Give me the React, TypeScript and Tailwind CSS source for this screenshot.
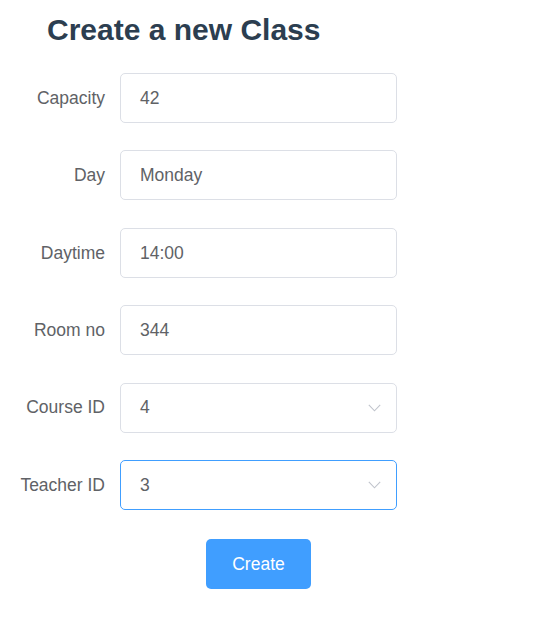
import React from "react";

const font = { fontFamily: '"Liberation Sans", Arial, sans-serif' };

const Chevron = () => (
  <svg width="13" height="8" viewBox="0 0 13 8" fill="none">
    <polyline points="0.8,0.8 6.5,6.8 12.2,0.8" stroke="#c0c4cc" strokeWidth="1.1" />
  </svg>
);

type Field = { label: string; value: string; select?: boolean; focused?: boolean };

const fields: Field[] = [
  { label: "Capacity", value: "42" },
  { label: "Day", value: "Monday" },
  { label: "Daytime", value: "14:00" },
  { label: "Room no", value: "344" },
  { label: "Course ID", value: "4", select: true },
  { label: "Teacher ID", value: "3", select: true, focused: true },
];

const App = () => {
  return (
    <div className="w-[560px] h-[634px] bg-white pt-[13px]" style={font}>
      <h2 className="pl-[47px] text-[30px] leading-[34px] font-bold text-[#2c3e50]">
        Create a new Class
      </h2>

      <form className="mt-[26px] flex flex-col gap-[27.4px]">
        {fields.map((f) => (
          <div key={f.label} className="flex items-center h-[50px]">
            <label className="w-[120px] pr-[15px] text-right text-[17.5px] text-[#606266]">
              {f.label}
            </label>
            <div
              className={
                "w-[277px] h-[50px] rounded-[5px] border flex items-center justify-between pl-[19px] pr-[15px] text-[17.5px] text-[#606266] " +
                (f.focused ? "border-[#409eff]" : "border-[#dcdfe6]")
              }
            >
              <span>{f.value}</span>
              {f.select && <Chevron />}
            </div>
          </div>
        ))}
      </form>

      <div className="pl-[120px] w-[397px] flex justify-center mt-[29.3px]">
        <button className="w-[105px] h-[50px] rounded-[5px] bg-[#409eff] text-white text-[17.5px]">
          Create
        </button>
      </div>
    </div>
  );
};

export default App;
